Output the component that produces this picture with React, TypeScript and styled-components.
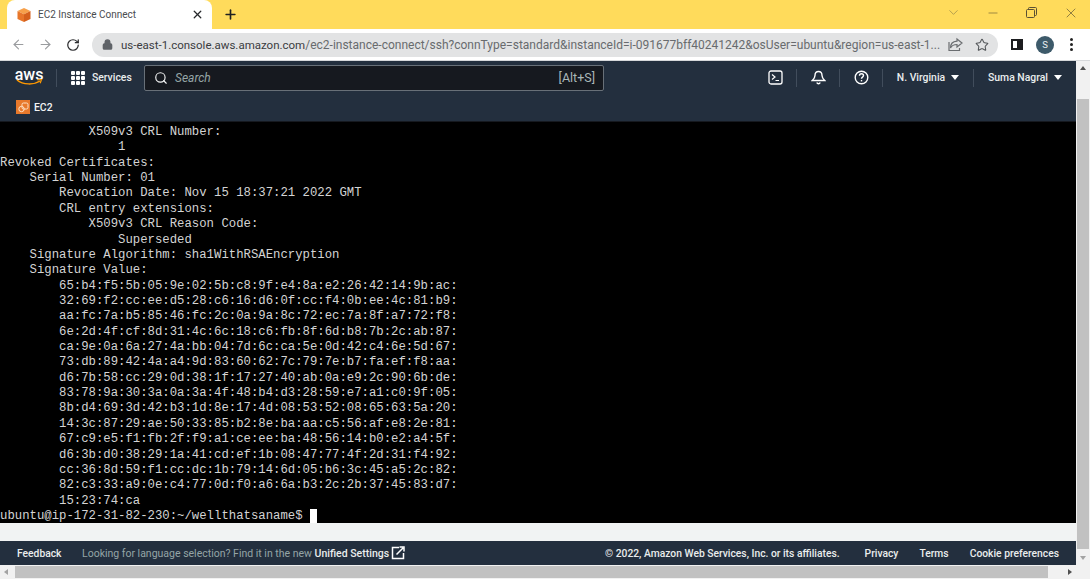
import React from 'react'
import styled, { createGlobalStyle } from 'styled-components'
import { ArrowLeft, ArrowRight, RotateCw, Lock, Star, X, Plus, ChevronDown, Minus, Search } from 'lucide-react'

const terminalLines = [
   '            X509v3 CRL Number:',
   '                1',
   'Revoked Certificates:',
   '    Serial Number: 01',
   '        Revocation Date: Nov 15 18:37:21 2022 GMT',
   '        CRL entry extensions:',
   '            X509v3 CRL Reason Code:',
   '                Superseded',
   '    Signature Algorithm: sha1WithRSAEncryption',
   '    Signature Value:',
   '        65:b4:f5:5b:05:9e:02:5b:c8:9f:e4:8a:e2:26:42:14:9b:ac:',
   '        32:69:f2:cc:ee:d5:28:c6:16:d6:0f:cc:f4:0b:ee:4c:81:b9:',
   '        aa:fc:7a:b5:85:46:fc:2c:0a:9a:8c:72:ec:7a:8f:a7:72:f8:',
   '        6e:2d:4f:cf:8d:31:4c:6c:18:c6:fb:8f:6d:b8:7b:2c:ab:87:',
   '        ca:9e:0a:6a:27:4a:bb:04:7d:6c:ca:5e:0d:42:c4:6e:5d:67:',
   '        73:db:89:42:4a:a4:9d:83:60:62:7c:79:7e:b7:fa:ef:f8:aa:',
   '        d6:7b:58:cc:29:0d:38:1f:17:27:40:ab:0a:e9:2c:90:6b:de:',
   '        83:78:9a:30:3a:0a:3a:4f:48:b4:d3:28:59:e7:a1:c0:9f:05:',
   '        8b:d4:69:3d:42:b3:1d:8e:17:4d:08:53:52:08:65:63:5a:20:',
   '        14:3c:87:29:ae:50:33:85:b2:8e:ba:aa:c5:56:af:e8:2e:81:',
   '        67:c9:e5:f1:fb:2f:f9:a1:ce:ee:ba:48:56:14:b0:e2:a4:5f:',
   '        d6:3b:d0:38:29:1a:41:cd:ef:1b:08:47:77:4f:2d:31:f4:92:',
   '        cc:36:8d:59:f1:cc:dc:1b:79:14:6d:05:b6:3c:45:a5:2c:82:',
   '        82:c3:33:a9:0e:c4:77:0d:f0:a6:6a:b3:2c:2b:37:45:83:d7:',
   '        15:23:74:ca',
]

const url = 'us-east-1.console.aws.amazon.com'
const urlPath = '/ec2-instance-connect/ssh?connType=standard&instanceId=i-091677bff40241242&osUser=ubuntu&region=us-east-1...'

export default function App() {
   return (
      <Page>
         <GlobalStyle />

         <TabStrip>
            <Tab>
               <svg width="16" height="16" viewBox="0 0 16 16">
                  <path d="M8 1l6.5 3L8 7.2 1.500 4z" fill="#f7a04a" />
                  <path d="M1.500 4L8 7.200V15l-6.500-3z" fill="#e8762a" />
                  <path d="M14.500 4L8 7.200V15l6.500-3z" fill="#d5601c" />
               </svg>
               <TabTitle>EC2 Instance Connect</TabTitle>
               <X size={13} strokeWidth={2.4} color="#26282b" />
            </Tab>
            <NewTab><Plus size={15} strokeWidth={2.6} color="#1f2020" /></NewTab>
            <WindowControls>
               <WindowButton><ChevronDown size={15} strokeWidth={1} color="#8a7c45" /></WindowButton>
               <WindowButton><Minus size={14} strokeWidth={1} color="#5a5032" /></WindowButton>
               <WindowButton>
                  <svg width="11" height="11" viewBox="0 0 11 11" fill="none" stroke="#5a5032">
                     <rect x="0.500" y="2.500" width="8" height="8" rx="1" />
                     <path d="M2.500 2.500v-1a1 1 0 0 1 1-1h6a1 1 0 0 1 1 1v6a1 1 0 0 1-1 1h-1" />
                  </svg>
               </WindowButton>
               <WindowButton><X size={16} strokeWidth={1} color="#5a5032" /></WindowButton>
            </WindowControls>
         </TabStrip>

         <Toolbar>
            <NavIcon><ArrowLeft size={15} strokeWidth={1.8} color="#9a9c9f" /></NavIcon>
            <NavIcon><ArrowRight size={15} strokeWidth={1.8} color="#9a9c9f" /></NavIcon>
            <NavIcon><RotateCw size={14} strokeWidth={2.1} color="#2b2c2e" /></NavIcon>
            <AddressBar>
               <Lock size={11} strokeWidth={3} color="#5f6368" fill="#5f6368" />
               <UrlText><UrlHost>{url}</UrlHost>{urlPath}</UrlText>
               <svg width="15" height="15" viewBox="0 0 15 15" fill="none" stroke="#6a6d70" strokeWidth="1.200">
                  <path d="M9 2l5 4-5 4V7.500C5.500 7.500 3.500 9 2.500 11c0-4 2.500-6.500 6.500-6.800z" />
                  <path d="M1 5v8.500h10.500V11" />
               </svg>
               <Star size={14} strokeWidth={1.8} color="#55585b" style={{ marginLeft: 12 }} />
            </AddressBar>
            <PanelIcon />
            <Avatar>S</Avatar>
            <Dots><i /><i /><i /></Dots>
         </Toolbar>

         <Viewport>
            <Main>
               <ConsoleHeader>
                  <TopRow>
                     <AwsLogo>
                        <AwsText>aws</AwsText>
                        <svg width="27" height="7" viewBox="0 0 27 7" fill="none">
                           <path d="M1 1c6 5 17 5 23 1" stroke="#f90" strokeWidth="1.500" />
                           <path d="M21.500 0.800l4-.3-1.300 3.700" stroke="#f90" strokeWidth="1.200" />
                        </svg>
                     </AwsLogo>
                     <Divider />
                     <ServicesButton>
                        <GridIcon>{Array.from({ length: 9 }, (_, i) => <i key={i} />)}</GridIcon>
                        Services
                     </ServicesButton>
                     <SearchBox>
                        <Search size={14} strokeWidth={2} color="#f2f3f3" />
                        <SearchText>Search</SearchText>
                        <Shortcut>[Alt+S]</Shortcut>
                     </SearchBox>
                     <HeaderActions>
                        <IconAction>
                           <svg width="15" height="15" viewBox="0 0 15 15" fill="none" stroke="#fff">
                              <rect x="1" y="1" width="13" height="13" rx="2" strokeWidth="1.300" />
                              <path d="M4 4.500L7 7l-3 2.500M7.500 10.500h3.500" strokeWidth="1.200" />
                           </svg>
                        </IconAction>
                        <Divider />
                        <IconAction>
                           <svg width="15" height="15" viewBox="0 0 15 15" fill="none" stroke="#fff" strokeWidth="1.400">
                              <path d="M7.500 1.500c-2.500 0-3.500 2-3.500 4 0 2-1 3.300-2.700 5h12.400c-1.700-1.700-2.700-3-2.700-5 0-2-1-4-3.500-4z" />
                              <path d="M5.800 12.500a1.800 1.800 0 0 0 3.400 0" />
                           </svg>
                        </IconAction>
                        <Divider />
                        <IconAction>
                           <svg width="15" height="15" viewBox="0 0 15 15" fill="none" stroke="#fff" strokeWidth="1.400">
                              <circle cx="7.500" cy="7.500" r="6.300" />
                              <path d="M5.500 5.800c0-1.200.9-2 2-2s2 .8 2 1.800c0 1.500-2 1.500-2 3.100" />
                              <path d="M7.500 10v1.400" />
                           </svg>
                        </IconAction>
                        <Divider />
                        <MenuAction $width={90}>N. Virginia<Caret /></MenuAction>
                        <Divider />
                        <MenuAction $width={102}>Suma Nagral<Caret /></MenuAction>
                     </HeaderActions>
                  </TopRow>
                  <ServiceRow>
                     <ServiceIcon>
                        <svg width="11" height="11" viewBox="0 0 11 11" fill="none" stroke="#ffe1c4" strokeWidth="1">
                           <rect x="4" y="1" width="6" height="6" rx="1.500" />
                           <circle cx="3.500" cy="7" r="2.700" />
                        </svg>
                     </ServiceIcon>
                     EC2
                  </ServiceRow>
               </ConsoleHeader>

               <Terminal>
                  {terminalLines.map((line, i) => <TerminalLine key={i}>{line}</TerminalLine>)}
                  <TerminalLine>ubuntu@ip-172-31-82-230:~/wellthatsaname$ <Cursor /></TerminalLine>
               </Terminal>

               <Spacer />

               <Footer>
                  <FooterStrong>Feedback</FooterStrong>
                  <FooterNote>
                     Looking for language selection? Find it in the new <FooterLink>Unified Settings</FooterLink>
                     <svg width="14" height="14" viewBox="0 0 14 14" fill="none" stroke="#fff" strokeWidth="1.500">
                        <path d="M8 1.500H1.500v11h11V7" />
                        <path d="M5.500 8.500L12 2M8.500 1h4.500v4.500" />
                     </svg>
                  </FooterNote>
                  <FooterLegal>
                     <span>© 2022, Amazon Web Services, Inc. or its affiliates.</span>
                     <span>Privacy</span>
                     <span>Terms</span>
                     <span>Cookie preferences</span>
                  </FooterLegal>
               </Footer>
            </Main>

            <VerticalScrollbar>
               <ScrollArrow $dir="up" />
               <VerticalThumb />
               <ScrollArrow $dir="down" />
            </VerticalScrollbar>
         </Viewport>

         <HorizontalScrollbar>
            <ScrollArrow $dir="left" />
            <HorizontalThumb />
            <ScrollArrow $dir="right" />
            <Corner />
         </HorizontalScrollbar>
      </Page>
   )
}


const GlobalStyle = createGlobalStyle`
   html, body {
      margin: 0;
      background: #fff;
      overflow: hidden;
   }
`

const Page = styled.div`
   width: 1090px;
   height: 579px;
   display: flex;
   flex-direction: column;
   overflow: hidden;
   font-family: Roboto, "Open Sans", sans-serif;
`

const TabStrip = styled.div`
   height: 29px;
   flex: none;
   display: flex;
   align-items: flex-end;
   padding-left: 7px;
   background-color: #ffdb5b;
`

const Tab = styled.div`
   width: 205px;
   height: 29px;
   box-sizing: border-box;
   display: flex;
   align-items: center;
   padding: 0 8px 0 9px;
   background-color: white;
   border-radius: 8px 8px 0 0;
`

const TabTitle = styled.span`
   flex: 1;
   margin-left: 6px;
   font-size: 10px;
   color: #4a4c4f;
`

const NewTab = styled.div`
   width: 36px;
   height: 29px;
   display: flex;
   align-items: center;
   justify-content: center;
`

const WindowControls = styled.div`
   margin-left: auto;
   height: 25px;
   align-self: flex-start;
   display: flex;
`

const WindowButton = styled.div`
   width: 39px;
   display: flex;
   align-items: center;
   justify-content: center;
`

const Toolbar = styled.div`
   height: 31px;
   flex: none;
   display: flex;
   align-items: center;
   padding-left: 5px;
   background-color: white;
   border-bottom: 1px solid #d6d8da;
`

const NavIcon = styled.div`
   width: 27px;
   display: flex;
   justify-content: center;
`

const AddressBar = styled.div`
   width: 906px;
   height: 24px;
   margin-left: 6px;
   flex: none;
   box-sizing: border-box;
   display: flex;
   align-items: center;
   padding: 0 9px 0 10px;
   background-color: #e2e3e4;
   border-radius: 12px;
`

const UrlText = styled.div`
   flex: 1;
   min-width: 0;
   margin: 0 9px 0 8px;
   white-space: nowrap;
   font-size: 12px;
   color: #686b6e;
`

const UrlHost = styled.span`
   font-size: 11.500px;
   color: #3a3c3f;
`

const PanelIcon = styled.div`
   width: 12px;
   height: 11px;
   margin-left: 13px;
   flex: none;
   box-sizing: border-box;
   border: solid #1c1d1f;
   border-width: 2px 6px 2px 2px;
`

const Avatar = styled.div`
   width: 18px;
   height: 18px;
   margin-left: 13px;
   flex: none;
   display: flex;
   align-items: center;
   justify-content: center;
   border-radius: 50%;
   background-color: #3d5a6a;
   color: #e8eef1;
   font-size: 9.500px;
`

const Dots = styled.div`
   margin-left: 16px;
   display: flex;
   flex-direction: column;
   gap: 2px;

   i {
      width: 3px;
      height: 3px;
      border-radius: 50%;
      background-color: #222;
   }
`

const Viewport = styled.div`
   flex: 1;
   min-height: 0;
   display: flex;
`

const Main = styled.div`
   flex: 1;
   min-width: 0;
   display: flex;
   flex-direction: column;
`

const ConsoleHeader = styled.header`
   height: 60px;
   flex: none;
   display: flex;
   flex-direction: column;
   background-color: #232f3e;
   border-bottom: 1px solid #16191f;
`

const TopRow = styled.div`
   height: 33px;
   display: flex;
   align-items: center;
   padding-left: 15px;
   color: white;
`

const AwsLogo = styled.div`
   width: 28px;
   margin-right: 13px;
   display: flex;
   flex-direction: column;
   align-items: center;
   margin-top: -5px;

   svg {
      margin-top: -5px;
   }
`

const AwsText = styled.span`
   font: 500 16px Roboto, sans-serif;
   color: white;
`

const Divider = styled.div`
   width: 1px;
   height: 18px;
   flex: none;
   background-color: #414d5c;
`

const ServicesButton = styled.div`
   margin-left: 14px;
   width: 73px;
   flex: none;
   display: flex;
   align-items: center;
   gap: 7px;
   font-size: 10.400px;
   font-weight: 500;
   color: #eaeded;
`

const GridIcon = styled.div`
   width: 14px;
   height: 14px;
   display: grid;
   grid-template-columns: repeat(3, 4px);
   grid-auto-rows: 4px;
   gap: 1px;

   i {
      background-color: white;
      border-radius: 1px;
   }
`

const SearchBox = styled.div`
   width: 460px;
   height: 26px;
   flex: none;
   box-sizing: border-box;
   display: flex;
   align-items: center;
   padding: 0 8px 0 9px;
   background-color: #16191f;
   border: 1px solid #687078;
   border-radius: 2px;
`

const SearchText = styled.span`
   flex: 1;
   margin-left: 7px;
   font-size: 12px;
   font-style: italic;
   color: #95a5a6;
`

const Shortcut = styled.span`
   font-size: 12.500px;
   color: #aab7b8;
`

const HeaderActions = styled.div`
   margin-left: auto;
   display: flex;
   align-items: center;
`

const IconAction = styled.div`
   width: 42px;
   display: flex;
   justify-content: center;
`

const MenuAction = styled.div<{ $width: number }>`
   width: ${(p) => p.$width}px;
   flex: none;
   box-sizing: border-box;
   display: flex;
   align-items: center;
   justify-content: center;
   gap: 6px;
   font-size: 10.400px;
   font-weight: 500;
   color: #eaeded;
`

const Caret = styled.span`
   width: 0;
   height: 0;
   border-left: 4px solid transparent;
   border-right: 4px solid transparent;
   border-top: 5px solid white;
`

const ServiceRow = styled.div`
   flex: 1;
   display: flex;
   align-items: center;
   gap: 4px;
   padding: 0 0 1px 16px;
   font-size: 10.400px;
   font-weight: 500;
   color: #f2f3f3;
`

const ServiceIcon = styled.div`
   width: 14px;
   height: 14px;
   display: flex;
   align-items: center;
   justify-content: center;
   background-color: #e8792b;
`

const Terminal = styled.div`
   height: 401px;
   flex: none;
   box-sizing: border-box;
   padding-top: 3px;
   overflow: hidden;
   background-color: black;
`

const TerminalLine = styled.div`
   height: 15.360px;
   line-height: 15.360px;
   white-space: pre;
   font-family: "Liberation Mono", monospace;
   font-size: 12.300px;
   color: #d4d4d4;
`

const Cursor = styled.span`
   display: inline-block;
   width: 7px;
   height: 14px;
   vertical-align: top;
   background-color: white;
`

const Spacer = styled.div`
   height: 18px;
   flex: none;
   background-color: #f1f3f3;
`

const Footer = styled.footer`
   height: 24px;
   flex: none;
   display: flex;
   align-items: center;
   padding: 0 17px;
   background-color: #232f3e;
   font-size: 10.300px;
   font-weight: 500;
   color: #eaeded;
`

const FooterStrong = styled.span`
   width: 65px;
   flex: none;
`

const FooterNote = styled.span`
   display: flex;
   align-items: center;
   white-space: pre-wrap;
   font-size: 10.500px;
   font-weight: 400;
   color: #95a5a6;

   svg {
      margin-left: 2px;
   }
`

const FooterLink = styled.span`
   font-weight: 500;
   color: #eaeded;
`

const FooterLegal = styled.div`
   margin-left: auto;
   display: flex;
   gap: 21px;

   span:first-child {
      margin-right: 4px;
   }
`

const VerticalScrollbar = styled.div`
   width: 14px;
   flex: none;
   display: flex;
   flex-direction: column;
   align-items: center;
   background-color: #f1f1f1;
`

const VerticalThumb = styled.div`
   width: 12px;
   flex: 1;
   margin: 24px 0 2px;
   background-color: #c1c1c1;
`

const ScrollArrow = styled.span<{ $dir: 'up' | 'down' | 'left' | 'right' }>`
   width: 0;
   height: 0;
   flex: none;
   margin: 5px 4px;
   border: 3px solid transparent;
   ${(p) => p.$dir === 'up' && 'border-top-width: 0; border-bottom: 4px solid #505050;'}
   ${(p) => p.$dir === 'down' && 'border-bottom-width: 0; border-top: 4px solid #a3a3a3;'}
   ${(p) => p.$dir === 'left' && 'border-left-width: 0; border-right: 4px solid #a3a3a3;'}
   ${(p) => p.$dir === 'right' && 'border-right-width: 0; border-left: 4px solid #505050;'}
`

const HorizontalScrollbar = styled.div`
   height: 14px;
   flex: none;
   display: flex;
   align-items: center;
   background-color: #f1f1f1;
`

const HorizontalThumb = styled.div`
   width: 1033px;
   height: 12px;
   flex: none;
   margin-left: 3px;
   margin-right: 16px;
   background-color: #c1c1c1;
`

const Corner = styled.div`
   flex: 1;
`
